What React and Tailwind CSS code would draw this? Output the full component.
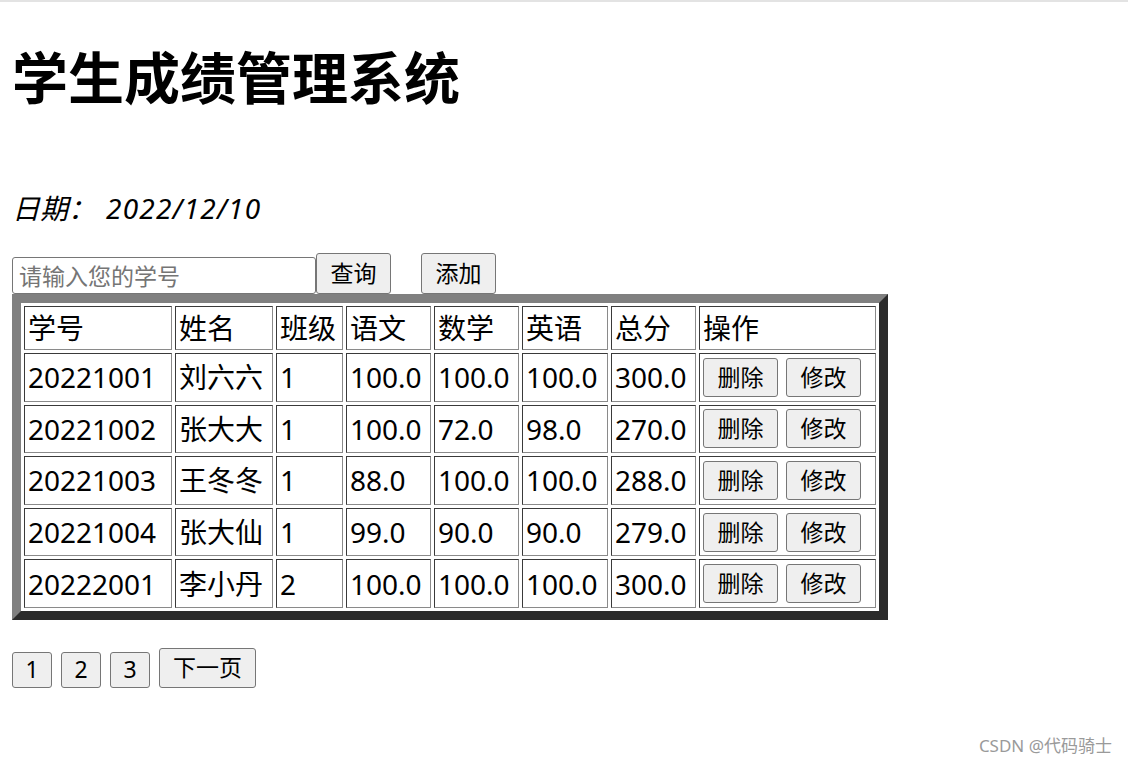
import React from "react";

const FONT = { fontFamily: '"Noto Sans", "Noto Sans CJK SC", sans-serif' };

const ROWS = [
  ["20221001", "刘六六", "1", "100.0", "100.0", "100.0", "300.0"],
  ["20221002", "张大大", "1", "100.0", "72.0", "98.0", "270.0"],
  ["20221003", "王冬冬", "1", "88.0", "100.0", "100.0", "288.0"],
  ["20221004", "张大仙", "1", "99.0", "90.0", "90.0", "279.0"],
  ["20222001", "李小丹", "2", "100.0", "100.0", "100.0", "300.0"],
];

const HEAD = ["学号", "姓名", "班级", "语文", "数学", "英语", "总分", "操作"];
const WIDTHS = ["w-[148px]", "w-[98px]", "w-[67px]", "w-[85px]", "w-[85px]", "w-[86px]", "w-[85px]", "w-[177px]"];

const cell =
  "border border-t-[#3a3a3a] border-l-[#3a3a3a] border-r-[#8a8a8a] border-b-[#8a8a8a] px-[3px] text-left align-middle font-normal";

function Btn({ children, className = "" }) {
  return (
    <button className={`bg-[#efefef] border border-[#767676] rounded-[3px] text-[23px] leading-none text-black ${className}`}>
      {children}
    </button>
  );
}

export default function App() {
  return (
    <div className="relative min-h-[766px] bg-white text-black" style={FONT}>
      <div className="h-[2px] bg-[#e3e3e3]" />
      <div className="px-3">
        <h1 className="mt-[47px] text-[56px] leading-[56px] font-bold">学生成绩管理系统</h1>
        <p className="mt-[89px] text-[28px] leading-[28px] italic">
          日期：<span className="ml-[10px] tracking-[1.2px]">2022/12/10</span>
        </p>
        <div className="mt-[31px] flex items-end">
          <input
            className="w-[304px] h-[37px] border border-[#767676] rounded-[3px] px-[6px] text-[23px] placeholder:text-[#757575] outline-none"
            placeholder="请输入您的学号"
          />
          <Btn className="w-[75px] h-[41px]">查询</Btn>
          <Btn className="ml-[30px] w-[75px] h-[41px]">添加</Btn>
        </div>
        <table
          className="border-separate border-spacing-[3.5px] border-[9px] border-t-[#808080] border-l-[#808080] border-r-[#2b2b2b] border-b-[#2b2b2b] text-[28px]"
        >
          <thead>
            <tr className="h-[44px]">
              {HEAD.map((h, i) => (
                <th key={h} className={`${cell} ${WIDTHS[i]}`}>
                  {h}
                </th>
              ))}
            </tr>
          </thead>
          <tbody>
            {ROWS.map((r) => (
              <tr key={r[0]} className="h-[48.6px]">
                {r.map((v, i) => (
                  <td key={i} className={cell}>
                    {v}
                  </td>
                ))}
                <td className={cell}>
                  <div className="flex gap-[8px]">
                    <Btn className="w-[75px] h-[39px]">删除</Btn>
                    <Btn className="w-[75px] h-[39px]">修改</Btn>
                  </div>
                </td>
              </tr>
            ))}
          </tbody>
        </table>
        <div className="mt-[28px] flex items-end gap-[9px]">
          <Btn className="w-[40px] h-[36px]">1</Btn>
          <Btn className="w-[40px] h-[36px]">2</Btn>
          <Btn className="w-[40px] h-[36px]">3</Btn>
          <Btn className="w-[97px] h-[40px]">下一页</Btn>
        </div>
      </div>
      <div className="absolute right-[16px] bottom-[8px] text-[17px] text-[#9a9a9a]">CSDN @代码骑士</div>
    </div>
  );
}
